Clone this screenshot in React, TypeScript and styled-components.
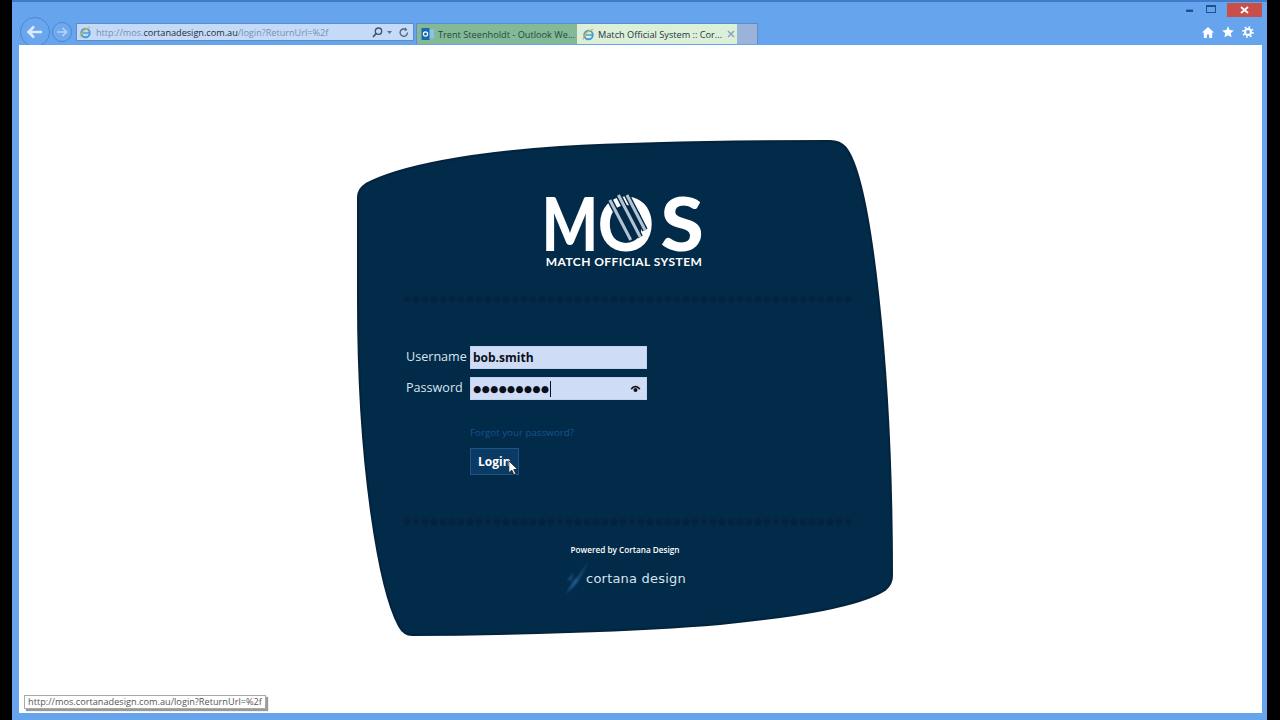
import React from "react";
import styled, { createGlobalStyle } from "styled-components";

const Global = createGlobalStyle`
  html, body { margin: 0; padding: 0; background: #000; }
  body { width: 1280px; height: 720px; overflow: hidden; font-family: "Open Sans", "Liberation Sans", sans-serif; }
`;
const Screen = styled.div`
  width: 1280px; height: 720px; background: #000; padding: 0 13px 0 12px; box-sizing: border-box; display: flex;
`;
const Win = styled.div`
  flex: 1; min-width: 0; display: flex; flex-direction: column; position: relative;
  background: #66a4ee; border-top: 2px solid #3f7cc9; padding: 0 5px 7px 7px; box-sizing: border-box;
`;
const TitleRow = styled.div`
  height: 14px; margin-top: 1px; display: flex; justify-content: flex-end; align-items: stretch; flex: none;
`;
const WinBtn = styled.div`
  width: 21px; display: flex; align-items: center; justify-content: center; color: #1c3f6e;
`;
const CloseBtn = styled.div`
  width: 35px; background: #c9504a; display: flex; align-items: center; justify-content: center; margin-left: 6px;
`;
const NavRow = styled.div`
  height: 21px; margin-top: 6px; margin-left: 1px; display: flex; align-items: flex-start; flex: none;
`;
const NavBack = styled.div`
  width: 30px; height: 30px; margin: -6px 0 0 0; border-radius: 50%; border: 1px solid #4f86d0; box-sizing: border-box;
  background: #69a6ee; display: flex; align-items: center; justify-content: center; flex: none;
`;
const NavFwd = styled.div`
  width: 20px; height: 20px; margin: -1px 4px 0 2px; border-radius: 50%; border: 1px solid #4f86d0; box-sizing: border-box;
  background: #6ea9ef; display: flex; align-items: center; justify-content: center; flex: none;
`;
const Address = styled.div`
  width: 338px; height: 18px; box-sizing: border-box; background: #c5daf6; border: 1px solid #5b8ccd;
  display: flex; align-items: center; padding: 0 3px 0 2px; flex: none;
`;
const AddressText = styled.div`
  margin-left: 4px; padding-top: 1px; font-size: 9.15px; line-height: 16px; color: #7690b4; white-space: nowrap; flex: 1;
`;
const Host = styled.span`
  color: #1d2c3e;
`;
const AddrIcons = styled.div`
  display: flex; align-items: center; gap: 3px; color: #3c5470;
`;
const Tabs = styled.div`
  margin-left: 2px; display: flex; height: 21px; border: 1px solid #5b8ccd; border-bottom: none; box-sizing: border-box; flex: none;
`;
const Tab = styled.div<{ $active?: boolean }>`
  width: 160px; display: flex; align-items: center; box-sizing: border-box; padding-left: ${p => (p.$active ? 5 : 4)}px;
  gap: 3px; font-size: 9.2px; white-space: nowrap; color: ${p => (p.$active ? "#24343f" : "#1f4a44")};
  background: ${p => (p.$active ? "#dcefd8" : "#83b996")};
`;
const TabTitle = styled.span`
  flex: 1;
`;
const TabClose = styled.span`
  width: 16px; display: flex; justify-content: center; color: #8fa3c4;
`;
const NewTab = styled.div`
  width: 20px; background: #9cb3d9; flex: none;
`;
const Tools = styled.div`
  margin-left: auto; margin-right: 8px; display: flex; gap: 8px; align-items: center; height: 18px; color: #fff;
`;
const Viewport = styled.div`
  flex: 1; margin-top: 1px; background: #fff; display: flex; flex-direction: column; align-items: flex-start;
  padding: 95px 0 0 338px; box-sizing: border-box; min-height: 0;
`;
const Card = styled.div`
  width: 536px; height: 497px; display: grid; flex: none;
`;
const CardShape = styled.svg`
  grid-area: 1 / 1; width: 536px; height: 497px; display: block;
`;
const CardBody = styled.div`
  grid-area: 1 / 1; padding-top: 53px; box-sizing: border-box; display: flex; flex-direction: column; z-index: 1; min-width: 0;
`;
const Brand = styled.div`
  display: flex; flex-direction: column; align-items: center; color: #fff; height: 102px; margin-left: -2px;
`;
const Word = styled.div`
  display: flex; height: 60px; align-items: center; margin-left: 4px;
  font-family: Lato, sans-serif; font-size: 74px; line-height: 60px;
`;
const Letter = styled.span<{ $sx: number; $weight: number }>`
  width: 56px; display: flex; justify-content: center; position: relative; flex: none;
  font-weight: ${p => p.$weight}; transform: scaleX(${p => p.$sx});
`;
const Slashes = styled.svg`
  position: absolute; left: 0; top: 0; width: 60px; height: 60px; overflow: visible;
`;
const Sub = styled.div`
  font-family: Lato, sans-serif; font-weight: 700; font-size: 12px; line-height: 14px; letter-spacing: 0.45px; white-space: nowrap; margin-top: 2px;
`;
const Dots = styled.div<{ $gap?: number }>`
  margin-left: 46px; margin-top: ${p => p.$gap ?? 0}px; width: 450px; height: 8px; flex: none; opacity: 0.9;
  background-image: radial-gradient(circle at 4px 4px, #03223d 0, #03223d 2.4px, rgba(3,34,61,0.35) 3.6px, transparent 4.2px);
  background-size: 9px 8px; background-repeat: repeat-x;
`;
const Form = styled.div`
  margin: 43px 0 0 49px; display: grid; grid-template-columns: 64px 177px; row-gap: 8px; align-items: center;
`;
const Label = styled.label`
  color: #d9e6ef; font-size: 12.6px; line-height: 18px; margin-top: -2px; white-space: nowrap;
`;
const Input = styled.div`
  height: 23px; background: #cfdcf6; color: #0a0f1a; font-weight: 700; font-size: 12px; box-sizing: border-box;
  display: flex; align-items: center; padding: 0 6px 0 3px; box-shadow: inset 0 0 0 1px #c1d2ee;
`;
const Secret = styled.span`
  font-family: "DejaVu Sans", sans-serif; font-size: 9.2px; letter-spacing: 0.45px; line-height: 22px; padding-top: 1px; white-space: nowrap;
`;
const Caret = styled.span`
  width: 1px; height: 16px; background: #111; margin-left: 1px;
`;
const Eye = styled.svg`
  margin-left: auto;
`;
const Actions = styled.div`
  margin: 25px 0 0 113px; display: flex; flex-direction: column; align-items: flex-start;
`;
const Forgot = styled.a`
  color: #125590; font-size: 9.8px; line-height: 16px; white-space: nowrap;
`;
const Login = styled.div`
  margin-top: 7px; width: 49px; height: 27px; box-sizing: border-box; background: #0b3a64; border: 1px solid #1d5488;
  color: #fff; font-weight: 700; font-size: 12px; line-height: 25px; padding-left: 7px; position: relative;
`;
const Cursor = styled.svg`
  position: absolute; left: 37px; top: 11px;
`;
const Foot = styled.div`
  display: flex; flex-direction: column; align-items: center; color: #fff;
`;
const Powered = styled.div`
  margin-top: 17px; font-size: 8.2px; font-weight: 600; line-height: 14px; white-space: nowrap;
`;
const CortanaRow = styled.div`
  margin: 6px 0 0 22px; display: flex; align-items: center; height: 30px; position: relative;
`;
const Bolt = styled.svg`
  position: absolute; left: -21px; top: -3px; filter: blur(0.8px);
`;
const Cortana = styled.div`
  font-family: "DejaVu Sans", sans-serif; font-size: 13px; letter-spacing: 0.2px; color: #d6e4ef; white-space: nowrap;
`;
const Tip = styled.div`
  position: absolute; left: 12px; bottom: 11px; height: 14px; width: 242px; box-sizing: border-box; background: #fff; border: 1px solid #a9a9a9;
  box-shadow: 2px 2px 1px #9a9a9a; color: #555; font-size: 9.2px; line-height: 12px; padding-left: 3px; white-space: nowrap;
`;

const IEIcon = ({ size = 13 }: { size?: number }) => (
  <svg width={size} height={size} viewBox="0 0 14 14" fill="none" style={{ flex: "none" }}>
    <circle cx="7" cy="7.5" r="4.6" stroke="#3f9bd6" strokeWidth="2" />
    <path d="M3 7.5h8" stroke="#3f9bd6" strokeWidth="1.5" />
    <path d="M1.5 12.5C0 10 6 2.5 12 1.2" stroke="#e2b44b" strokeWidth="1.3" />
  </svg>
);

export default function App() {
  return (
    <Screen>
      <Global />
      <Win>
        <TitleRow>
          <WinBtn>
            <svg width="7" height="3"><rect width="7" height="2.4" y="0.6" fill="#1f4f8c" /></svg>
          </WinBtn>
          <WinBtn>
            <svg width="10" height="8" style={{ marginBottom: 3 }}><rect x="0.5" y="0.5" width="9" height="7" fill="none" stroke="#1f4f8c" /><rect width="10" height="2" fill="#1f4f8c" /></svg>
          </WinBtn>
          <CloseBtn>
            <svg width="9" height="8"><path d="M1 1l7 6M8 1L1 7" stroke="#fff" strokeWidth="1.8" /></svg>
          </CloseBtn>
        </TitleRow>
        <NavRow>
          <NavBack>
            <svg width="18" height="14" viewBox="0 0 18 14" fill="none"><path d="M8 1.5L2.5 7 8 12.5M3 7h13" stroke="#dceafc" strokeWidth="2.6" /></svg>
          </NavBack>
          <NavFwd>
            <svg width="12" height="10" viewBox="0 0 12 10" fill="none"><path d="M6.5 1L10.5 5 6.5 9M10 5H1" stroke="#b7d3f5" strokeWidth="1.7" /></svg>
          </NavFwd>
          <Address>
            <IEIcon />
            <AddressText>http://mos.<Host>cortanadesign.com.au</Host>/login?ReturnUrl=%2f</AddressText>
            <AddrIcons>
              <svg width="11" height="11" viewBox="0 0 11 11" fill="none"><circle cx="6.5" cy="4.2" r="3.2" stroke="#3c5470" strokeWidth="1.3" /><path d="M4 6.6L1 10" stroke="#3c5470" strokeWidth="1.6" /></svg>
              <svg width="5" height="3" style={{ margin: "0 4px 0 1px" }}><path d="M0 0h5L2.5 3z" fill="#5c7290" /></svg>
              <svg width="10" height="11" viewBox="0 0 10 11" fill="none" style={{ marginRight: 1 }}><path d="M8.5 5.5a3.7 3.7 0 1 1-1.4-2.8" stroke="#4a6280" strokeWidth="1.3" /><path d="M6 .3l2.4 2.6L5.6 4z" fill="#4a6280" /></svg>
            </AddrIcons>
          </Address>
          <Tabs>
            <Tab>
              <svg width="14" height="14" viewBox="0 0 14 14" style={{ flex: "none" }}>
                <rect x="5" y="2.5" width="8" height="9" fill="#8fc1e6" />
                <rect x="0.5" y="1" width="8" height="12" fill="#1769b0" />
                <circle cx="4.5" cy="7" r="2.1" fill="none" stroke="#fff" strokeWidth="1.2" />
              </svg>
              <TabTitle>Trent Steenholdt - Outlook We...</TabTitle>
            </Tab>
            <Tab $active>
              <IEIcon />
              <TabTitle>Match Official System :: Cor...</TabTitle>
              <TabClose>
                <svg width="8" height="8"><path d="M1 1l6 6M7 1L1 7" stroke="#8fa3c4" strokeWidth="1.6" /></svg>
              </TabClose>
            </Tab>
            <NewTab />
          </Tabs>
          <Tools>
            <svg width="12" height="11" viewBox="0 0 12 11"><path d="M6 0L0 5.5h1.8V11h3V7.5h2.4V11h3V5.5H12z" fill="#fff" /></svg>
            <svg width="12" height="12" viewBox="0 0 12 12"><path d="M6 .3l1.7 3.8 4.1.4-3.1 2.7.9 4.1L6 9.2l-3.6 2.1.9-4.1L.2 4.5l4.1-.4z" fill="#fff" /></svg>
            <svg width="12" height="12" viewBox="0 0 12 12" fill="none"><circle cx="6" cy="6" r="3" stroke="#fff" strokeWidth="2" /><circle cx="6" cy="6" r="5" stroke="#fff" strokeWidth="1.6" strokeDasharray="1.8 2.1" /></svg>
          </Tools>
        </NavRow>
        <Viewport>
          <Card>
            <CardShape viewBox="0 0 536 497">
              <path
                d="M1 57 Q1 49 9 44 C43 26 113 13 203 7 C293 2 393 1 473 1 Q483 1 489 8 C514 40 535 230 535 436 Q535 444 528 450 C503 466 443 476 363 484 C283 491 143 495 55 495 Q47 495 42 486 C23 451 1 330 1 160 Z"
                fill="#022a49"
                stroke="#04233c"
                strokeWidth="2"
              />
            </CardShape>
            <CardBody>
              <Brand>
                <Word>
                  <Letter $sx={0.8} $weight={900}>M</Letter>
                  <Letter $sx={0.95} $weight={700}>
                    O
                    <Slashes viewBox="0 0 60 60">
                      <path d="M11 7l22 40M20 2l23 42M29 2l19 35" stroke="#022a49" strokeWidth="6" />
                      <path d="M11 7l22 40M20 2l23 42M29 2l19 35" stroke="#b4c3d3" strokeWidth="3.2" />
                    </Slashes>
                  </Letter>
                  <Letter $sx={1.06} $weight={900}>S</Letter>
                </Word>
                <Sub>MATCH OFFICIAL SYSTEM</Sub>
              </Brand>
              <Dots />
              <Form>
                <Label>Username</Label>
                <Input>bob.smith</Input>
                <Label>Password</Label>
                <Input>
                  <Secret>●●●●●●●●●</Secret>
                  <Caret />
                  <Eye width="11" height="8" viewBox="0 0 11 8">
                    <path d="M.5 4C2 1.5 3.5.7 5.5.7S9 1.5 10.5 4L9 4.6C8 3 7 2.4 5.5 2.4S3 3 2 4.6z" fill="#111" />
                    <circle cx="5.5" cy="5" r="2" fill="#111" />
                  </Eye>
                </Input>
              </Form>
              <Actions>
                <Forgot>Forgot your password?</Forgot>
                <Login>
                  Login
                  <Cursor width="11" height="16" viewBox="0 0 11 16">
                    <path d="M.8.8v12l3-2.6 2 4.4 2-.9-2-4.2h4z" fill="#fff" stroke="#0a1420" strokeWidth="0.8" />
                  </Cursor>
                </Login>
              </Actions>
              <Dots $gap={43} />
              <Foot>
                <Powered>Powered by Cortana Design</Powered>
                <CortanaRow>
                  <Bolt width="26" height="36" viewBox="0 0 26 36" fill="none">
                    <path d="M24 1L13 17 9 20 1 34 12 23z" fill="#2a6ea6" opacity="0.75" />
                    <path d="M9 12L2 20l4 1z" fill="#1f5f94" opacity="0.7" />
                  </Bolt>
                  <Cortana>cortana design</Cortana>
                </CortanaRow>
              </Foot>
            </CardBody>
          </Card>
        </Viewport>
        <Tip>http://mos.cortanadesign.com.au/login?ReturnUrl=%2f</Tip>
      </Win>
    </Screen>
  );
}
